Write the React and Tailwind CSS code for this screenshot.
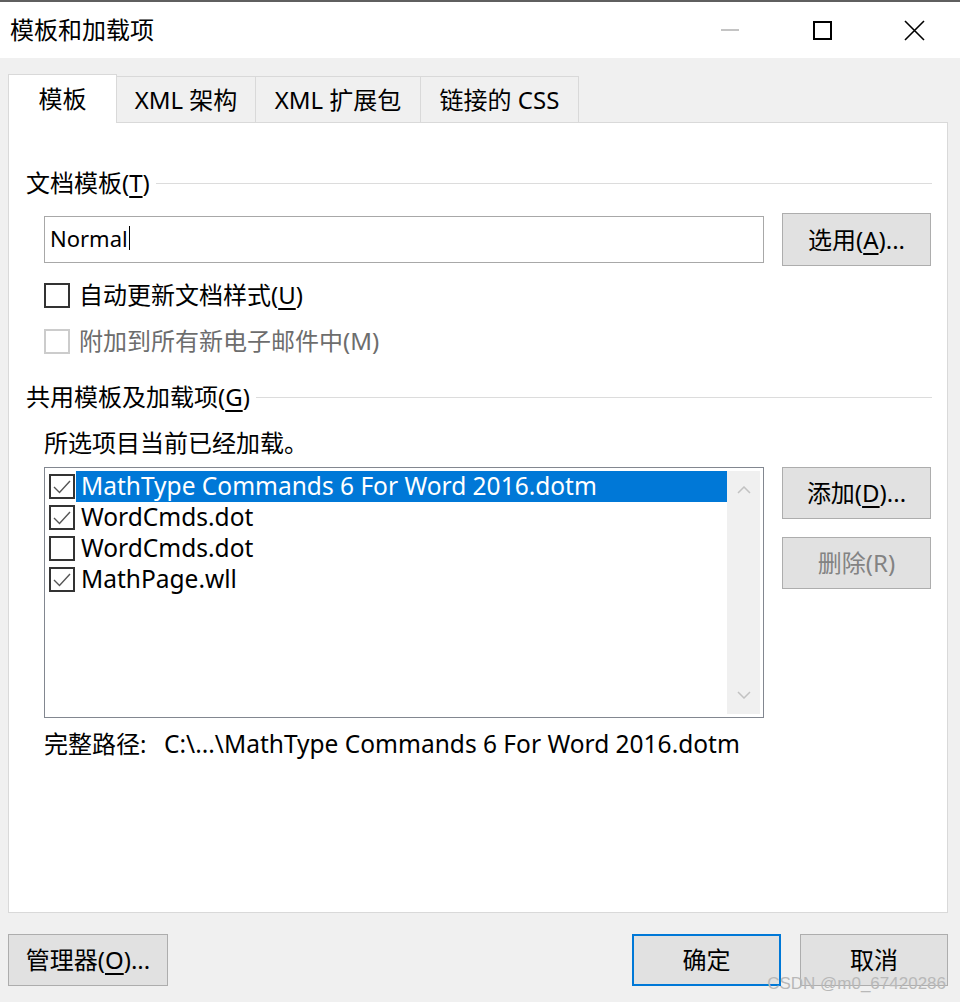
import React from "react";

function CheckBox({ checked, disabled }) {
  return (
    <div
      className={
        disabled
          ? "w-[26px] h-[25px] border-2 border-[#cccccc] bg-white shrink-0"
          : "w-[26px] h-[25px] border-2 border-[#333333] bg-white shrink-0 flex items-center justify-center"
      }
    >
      {checked && (
        <svg width="20" height="18" viewBox="0 0 20 18">
          <path d="M2 9 L7.5 14.5 L18 3" fill="none" stroke="#555555" strokeWidth="1.4" />
        </svg>
      )}
    </div>
  );
}

function U({ children }) {
  return <span className="underline underline-offset-[4px] decoration-[1.5px]">{children}</span>;
}

function ListItem({ checked, selected, children }) {
  return (
    <div className="h-[31px] flex items-center pl-[1px]">
      <CheckBox checked={checked} />
      <div
        className={
          selected
            ? "ml-[1px] flex-1 h-[31px] flex items-center pl-[5px] bg-[#0078d7] text-white"
            : "ml-[1px] flex-1 h-[31px] flex items-center pl-[5px] text-black"
        }
      >
        <span className="text-[24.5px] font-['Noto_Sans','Noto_Sans_CJK_SC',sans-serif] leading-none">{children}</span>
      </div>
    </div>
  );
}

export default function App() {
  return (
    <div className="relative w-[960px] h-[1002px] bg-[#f0f0f0] flex flex-col font-['Noto_Sans','Noto_Sans_CJK_SC',sans-serif] text-[24px] text-black overflow-hidden">
      <div className="h-[2px] bg-[#5f5f5f]" />
      {/* title bar */}
      <div className="h-[56px] bg-white flex items-center">
        <div className="pl-[10px] text-[24px] leading-none">模板和加载项</div>
        <div className="ml-auto flex h-full">
          <div className="w-[92px] h-full flex items-center justify-center">
            <div className="w-[18px] h-[2px] bg-[#c4c4c4]" />
          </div>
          <div className="w-[92px] h-full flex items-center justify-center">
            <div className="w-[19px] h-[19px] border-2 border-black" />
          </div>
          <div className="w-[92px] h-full flex items-center justify-center">
            <svg width="21" height="21" viewBox="0 0 21 21">
              <path d="M1 1 L20 20 M20 1 L1 20" stroke="#000" strokeWidth="1.6" fill="none" />
            </svg>
          </div>
        </div>
      </div>

      {/* body */}
      <div className="flex-1 flex flex-col pl-[8px] pr-[12px] pt-[16px]">
        {/* tabs */}
        <div className="flex items-end h-[48px]">
          <div className="relative z-10 -mb-px w-[109px] h-[49px] bg-white border border-b-0 border-[#d9d9d9] flex items-center justify-center">
            <span className="leading-none">模板</span>
          </div>
          <div className="w-[139px] h-[46px] border border-l-0 border-b-0 border-[#d9d9d9] flex items-center justify-center">
            <span className="leading-none">XML 架构</span>
          </div>
          <div className="w-[165px] h-[46px] border border-l-0 border-b-0 border-[#d9d9d9] flex items-center justify-center">
            <span className="leading-none">XML 扩展包</span>
          </div>
          <div className="w-[158px] h-[46px] border border-l-0 border-b-0 border-[#d9d9d9] flex items-center justify-center">
            <span className="leading-none">链接的 CSS</span>
          </div>
        </div>

        {/* panel */}
        <div className="h-[791px] bg-white border border-[#d9d9d9] flex flex-col pl-[17px] pr-[15px]">
          <div className="mt-[45px] h-[30px] flex items-center gap-[6px]">
            <span className="leading-none">文档模板(<U>T</U>)</span>
            <div className="flex-1 h-px bg-[#dcdcdc]" />
          </div>

          <div className="mt-[15px] h-[53px] flex items-center pl-[18px] pr-[1px] gap-[18px]">
            <div className="flex-1 h-[47px] border border-[#a8a8a8] bg-white flex items-center pl-[5px] pb-[3px]">
              <span className="text-[22px] leading-none">Normal</span>
              <div className="w-px h-[24px] bg-black ml-[1px]" />
            </div>
            <div className="w-[149px] h-[53px] bg-[#e1e1e1] border border-[#adadad] flex items-center justify-center">
              <span className="leading-none">选用(<U>A</U>)...</span>
            </div>
          </div>

          <div className="mt-[6px] flex flex-col pl-[18px]">
            <div className="h-[46px] flex items-center gap-[9px]">
              <CheckBox />
              <span className="leading-none">自动更新文档样式(<U>U</U>)</span>
            </div>
            <div className="h-[46px] flex items-center gap-[9px]">
              <CheckBox disabled />
              <span className="leading-none text-[#6d6d6d]">附加到所有新电子邮件中(M)</span>
            </div>
          </div>

          <div className="mt-[18px] h-[30px] flex items-center gap-[6px]">
            <span className="leading-none">共用模板及加载项(<U>G</U>)</span>
            <div className="flex-1 h-px bg-[#dcdcdc]" />
          </div>

          <div className="mt-[16px] h-[30px] flex items-center pl-[18px]">
            <span className="leading-none">所选项目当前已经加载。</span>
          </div>

          <div className="mt-[9px] flex pl-[18px] pr-[1px] gap-[18px]">
            <div className="flex-1 h-[251px] border border-[#828790] bg-white p-[3px] flex">
              <div className="flex-1 flex flex-col">
                <ListItem checked selected>MathType Commands 6 For Word 2016.dotm</ListItem>
                <ListItem checked>WordCmds.dot</ListItem>
                <ListItem>WordCmds.dot</ListItem>
                <ListItem checked>MathPage.wll</ListItem>
              </div>
              <div className="w-[33px] bg-[#f0f0f0] flex flex-col justify-between items-center py-[15px]">
                <svg width="14" height="8" viewBox="0 0 14 8">
                  <path d="M1 7 L7 1 L13 7" fill="none" stroke="#c2c2c2" strokeWidth="1.5" />
                </svg>
                <svg width="14" height="8" viewBox="0 0 14 8">
                  <path d="M1 1 L7 7 L13 1" fill="none" stroke="#c2c2c2" strokeWidth="1.5" />
                </svg>
              </div>
            </div>
            <div className="w-[149px] flex flex-col gap-[18px]">
              <div className="h-[52px] bg-[#e1e1e1] border border-[#adadad] flex items-center justify-center">
                <span className="leading-none">添加(<U>D</U>)...</span>
              </div>
              <div className="h-[52px] bg-[#e1e1e1] border border-[#adadad] flex items-center justify-center">
                <span className="leading-none text-[#838383]">删除(R)</span>
              </div>
            </div>
          </div>

          <div className="mt-[11px] h-[30px] flex items-center pl-[18px]">
            <span className="w-[120px] leading-none">完整路径:</span>
            <span className="leading-none text-[24.5px]">C:\...\MathType Commands 6 For Word 2016.dotm</span>
          </div>
        </div>

        {/* bottom buttons */}
        <div className="mt-[21px] flex items-center">
          <div className="w-[160px] h-[52px] bg-[#e1e1e1] border border-[#adadad] flex items-center justify-center">
            <span className="leading-none">管理器(<U>O</U>)...</span>
          </div>
          <div className="ml-auto w-[149px] h-[52px] bg-[#e1e1e1] border-2 border-[#0078d7] flex items-center justify-center">
            <span className="leading-none">确定</span>
          </div>
          <div className="ml-[19px] w-[148px] h-[52px] bg-[#e1e1e1] border border-[#adadad] flex items-center justify-center">
            <span className="leading-none">取消</span>
          </div>
        </div>
      </div>

      <div className="absolute right-[14px] bottom-[10px] text-[17px] leading-none font-['Liberation_Sans',sans-serif] text-[#b8b8b8]">
        CSDN @m0_67420286
      </div>
    </div>
  );
}
